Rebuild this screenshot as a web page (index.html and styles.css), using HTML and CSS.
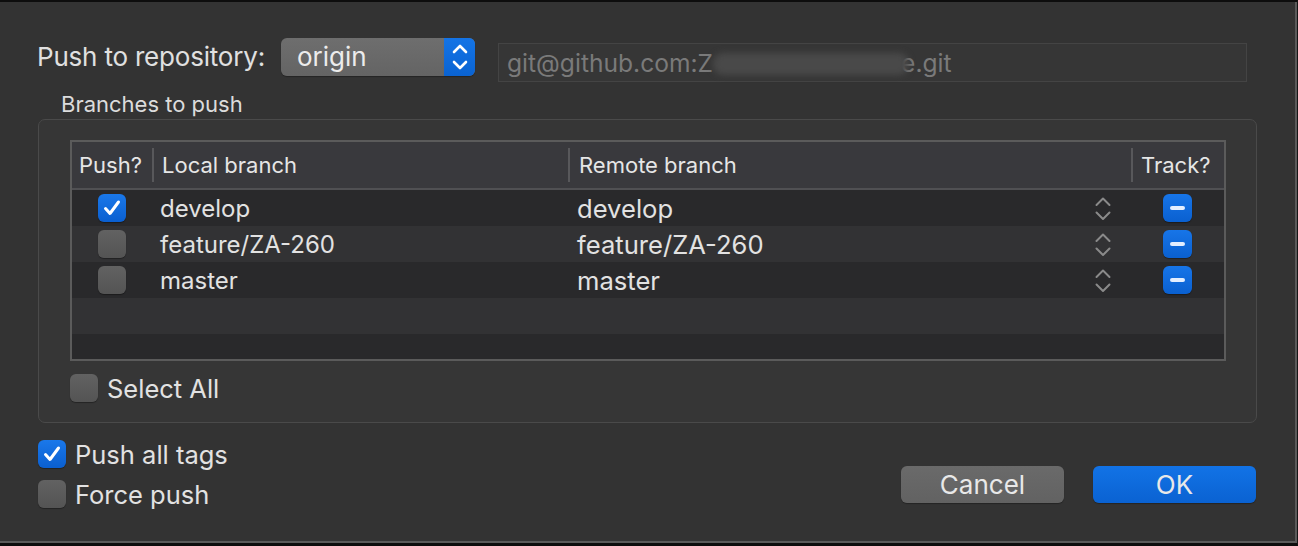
FILE: index.html
```html
<!DOCTYPE html>
<html>
<head>
<meta charset="utf-8">
<link rel="stylesheet" href="styles.css">
</head>
<body>
<div class="window">
  <div class="frame">
    <div class="top-row">
      <div class="repo-label">Push to repository:</div>
      <div class="popup">
        <span class="popup-text">origin</span>
        <span class="popup-arrows">
          <svg width="31" height="38" viewBox="0 0 31 38"><path d="M10 14 L16 8 L22 14 M10 24 L16 30 L22 24" fill="none" stroke="#fff" stroke-width="2.6" stroke-linecap="round" stroke-linejoin="round"/></svg>
        </span>
      </div>
      <div class="url-field"><span class="url-text">git@github.com:Z</span><span class="blur"></span><span class="url-text">e.git</span></div>
    </div>

    <div class="group-title">Branches to push</div>
    <div class="group">
      <div class="table">
        <div class="thead">
          <div class="th col-push">Push?</div>
          <div class="th col-local sep">Local branch</div>
          <div class="th col-remote sep">Remote branch</div>
          <div class="th col-track sep">Track?</div>
        </div>
        <div class="tbody">
          <div class="row">
            <div class="cell col-push"><span class="checkbox checked"><svg width="28" height="28" viewBox="0 0 28 28"><path d="M7.5 14.5 L12 19.5 L20.5 8" fill="none" stroke="#fff" stroke-width="3" stroke-linecap="round" stroke-linejoin="round"/></svg></span></div>
            <div class="cell col-local">develop</div>
            <div class="cell col-remote"><span>develop</span><svg class="stepper" width="16" height="24" viewBox="0 0 16 24"><path d="M1.5 8 L8 1.5 L14.5 8 M1.5 15.5 L8 22 L14.5 15.5" fill="none" stroke="#8a8a8a" stroke-width="2" stroke-linecap="round" stroke-linejoin="round"/></svg></div>
            <div class="cell col-track"><span class="minus"><span class="bar"></span></span></div>
          </div>
          <div class="row">
            <div class="cell col-push"><span class="checkbox"></span></div>
            <div class="cell col-local">feature/ZA-260</div>
            <div class="cell col-remote"><span>feature/ZA-260</span><svg class="stepper" width="16" height="24" viewBox="0 0 16 24"><path d="M1.5 8 L8 1.5 L14.5 8 M1.5 15.5 L8 22 L14.5 15.5" fill="none" stroke="#8a8a8a" stroke-width="2" stroke-linecap="round" stroke-linejoin="round"/></svg></div>
            <div class="cell col-track"><span class="minus"><span class="bar"></span></span></div>
          </div>
          <div class="row">
            <div class="cell col-push"><span class="checkbox"></span></div>
            <div class="cell col-local">master</div>
            <div class="cell col-remote"><span>master</span><svg class="stepper" width="16" height="24" viewBox="0 0 16 24"><path d="M1.5 8 L8 1.5 L14.5 8 M1.5 15.5 L8 22 L14.5 15.5" fill="none" stroke="#8a8a8a" stroke-width="2" stroke-linecap="round" stroke-linejoin="round"/></svg></div>
            <div class="cell col-track"><span class="minus"><span class="bar"></span></span></div>
          </div>
          <div class="row"></div>
          <div class="row"></div>
        </div>
      </div>
      <div class="check-row select-all">
        <span class="checkbox"></span>
        <span class="check-label">Select All</span>
      </div>
    </div>

    <div class="bottom">
      <div class="options">
        <div class="check-row">
          <span class="checkbox checked"><svg width="28" height="28" viewBox="0 0 28 28"><path d="M7.5 14.5 L12 19.5 L20.5 8" fill="none" stroke="#fff" stroke-width="3" stroke-linecap="round" stroke-linejoin="round"/></svg></span>
          <span class="check-label">Push all tags</span>
        </div>
        <div class="check-row">
          <span class="checkbox"></span>
          <span class="check-label">Force push</span>
        </div>
      </div>
      <div class="buttons">
        <div class="btn btn-cancel">Cancel</div>
        <div class="btn btn-ok">OK</div>
      </div>
    </div>
  </div>
</div>
</body>
</html>
```

FILE: styles.css
```css
* { box-sizing: border-box; }
html, body { margin: 0; padding: 0; background: #111; }
body {
  font-family: Inter, "Noto Sans", "Liberation Sans", sans-serif;
  color: #e2e2e2;
}
.window {
  width: 1298px;
  height: 546px;
  border-top: 2px solid #0d0d0d;
  border-bottom: 3px solid #0d0d0d;
  border-right: 1px solid #161616;
  background: #333333;
}
.frame {
  height: 100%;
  border-right: 2px solid #5a5a5a;
  border-bottom: 2px solid #5a5a5a;
  padding: 36px 0 0 37px;
}
.top-row {
  display: flex;
  align-items: flex-start;
  height: 44px;
}
.repo-label {
  width: 244px;
  font-size: 26px;
  line-height: 38px;
  color: #e0e0e0;
  letter-spacing: -0.2px;
}
.popup {
  width: 194px;
  height: 38px;
  display: flex;
  border-radius: 6px;
  background: linear-gradient(#6e6e6e, #646464);
  overflow: hidden;
  box-shadow: 0 1px 1px rgba(0,0,0,0.3);
}
.popup-text {
  flex: 1;
  padding-left: 16px;
  font-size: 26px;
  line-height: 38px;
  color: #ececec;
}
.popup-arrows {
  width: 31px;
  height: 38px;
  background: linear-gradient(#1474e6, #0a63d2);
  display: flex;
}
.url-field {
  margin-left: 23px;
  margin-top: 5px;
  width: 749px;
  height: 39px;
  background: #363636;
  border: 1px solid #444444;
  display: flex;
  align-items: center;
  padding-left: 8px;
  font-size: 24.6px;
  color: #7a7a7a;
}
.blur {
  display: inline-block;
  width: 196px;
  height: 22px;
  margin: 2px -8px 0 0;
  background: #494949;
  border-radius: 10px;
  filter: blur(3px);
}
.group-title {
  margin: 10px 0 0 24px;
  font-size: 22px;
  line-height: 24px;
  color: #dcdcdc;
}
.group {
  margin: 3px 0 0 1px;
  width: 1219px;
  height: 304px;
  border: 1px solid #4a4a4a;
  border-radius: 7px;
  background: #363636;
  padding: 20px 0 0 31px;
}
.table {
  width: 1156px;
  height: 221px;
  border: 2px solid #5b5b5b;
  display: flex;
  flex-direction: column;
  overflow: hidden;
}
.thead {
  height: 48px;
  flex: none;
  display: flex;
  align-items: center;
  background: #39393d;
  border-bottom: 2px solid #505053;
}
.th {
  font-size: 22px;
  line-height: 34px;
  color: #e6e6e6;
  padding-left: 8px;
}
.th.sep { border-left: 2px solid #58585b; }
.col-push { width: 80px; flex: none; }
.col-local { width: 416px; flex: none; }
.col-remote { width: 563px; flex: none; }
.col-track { flex: 1; }
.th.col-push { padding-left: 7px; }
.th.col-local { padding-left: 8px; }
.th.col-remote { padding-left: 9px; }
.th.col-track { padding-left: 8px; }
.tbody { flex: 1; overflow: hidden; }
.row {
  height: 36px;
  display: flex;
  align-items: center;
  background: #29292b;
}
.row:nth-child(even) { background: #323234; }
.cell {
  font-size: 24px;
  color: #e2e2e2;
  height: 36px;
  display: flex;
  align-items: center;
}
.cell.col-push { justify-content: center; padding-left: 0; }
.cell.col-local { padding-left: 8px; }
.cell.col-remote { padding-left: 9px; justify-content: space-between; padding-right: 20px; font-size: 25.6px; }
.stepper { margin-top: 2px; }
.cell.col-track { justify-content: center; }
.checkbox {
  width: 28px;
  height: 28px;
  border-radius: 6px;
  background: linear-gradient(#626262, #545454);
  box-shadow: 0 1px 1px rgba(0,0,0,0.35);
  display: inline-flex;
  flex: none;
}
.checkbox.checked {
  background: linear-gradient(#1a78ea, #0a5fd0);
}
.minus {
  width: 29px;
  height: 28px;
  border-radius: 6px;
  background: linear-gradient(#1775e8, #0a60d0);
  display: inline-flex;
  align-items: center;
  justify-content: center;
  box-shadow: 0 1px 1px rgba(0,0,0,0.35);
}
.minus .bar {
  width: 15px;
  height: 4px;
  border-radius: 2px;
  background: #e3eeff;
}
.check-row {
  display: flex;
  align-items: center;
  height: 28px;
}
.check-label {
  margin-left: 9px;
  font-size: 25.5px;
  color: #e2e2e2;
}
.select-all { margin-top: 13px; }
.bottom {
  display: flex;
  justify-content: space-between;
  width: 1218px;
  margin: 17px 0 0 1px;
}
.options { display: flex; flex-direction: column; gap: 12px; }
.buttons { display: flex; gap: 29px; margin-top: 26px; }
.btn {
  width: 163px;
  height: 37px;
  border-radius: 6px;
  font-size: 26px;
  line-height: 37px;
  text-align: center;
  color: #e8e8e8;
  box-shadow: 0 1px 1px rgba(0,0,0,0.3);
}
.btn-cancel { background: linear-gradient(#6a6a6a, #626262); }
.btn-ok { background: linear-gradient(#1273e6, #0a62d2); }
```
